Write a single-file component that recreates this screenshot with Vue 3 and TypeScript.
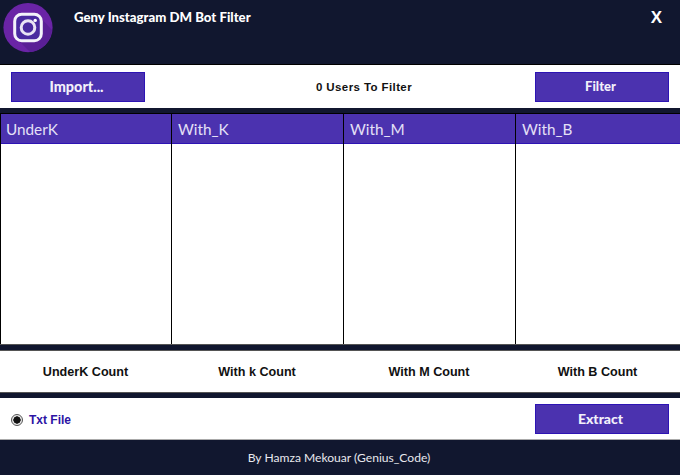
<script setup lang="ts">
const columns = ["UnderK", "With_K", "With_M", "With_B"];
const counts = ["UnderK Count", "With k Count", "With M Count", "With B Count"];
</script>

<template>
  <div class="app">
    <header class="header">
      <svg class="logo" width="50" height="50" viewBox="0 0 50 50" aria-hidden="true">
        <circle cx="25" cy="24.6" r="24.6" fill="#6a24a6" />
        <path d="M13 35 L36 13 L49 27 A24.6 24.6 0 0 1 27 49 Z" fill="#5a1f96" />
        <rect x="11.7" y="11.2" width="26.6" height="26.6" rx="7" fill="#4a2aa0" stroke="#f4f2fa" stroke-width="3" />
        <circle cx="25" cy="24.5" r="6.8" fill="none" stroke="#e9e4f4" stroke-width="3" />
        <circle cx="32.2" cy="17.4" r="1.7" fill="#fff" />
      </svg>
      <h1 class="title">Geny Instagram DM Bot Filter</h1>
      <span class="close">X</span>
    </header>

    <section class="toolbar">
      <button type="button" class="btn btn-import">Import...</button>
      <span class="users">0 Users To Filter</span>
      <button type="button" class="btn btn-small">Filter</button>
    </section>

    <section class="lists">
      <div v-for="col in columns" :key="col" class="col">
        <div class="col-head">{{ col }}</div>
      </div>
    </section>

    <section class="counts">
      <span v-for="c in counts" :key="c" class="count">{{ c }}</span>
    </section>

    <section class="extract">
      <label class="radio">
        <span class="dot"></span>
        <span class="radio-text">Txt File</span>
      </label>
      <button type="button" class="btn btn-extract">Extract</button>
    </section>

    <footer class="footer">By Hamza Mekouar (Genius_Code)</footer>
  </div>
</template>

<style scoped>
.app {
  width: 680px;
  height: 475px;
  display: flex;
  flex-direction: column;
  overflow: hidden;
  background: #11172f;
  font-family: "Liberation Sans", Arial, sans-serif;
}

.header {
  flex: none;
  display: flex;
  align-items: flex-start;
  padding: 3px 0 0 3px;
  box-sizing: border-box;
  border-bottom: 1px solid #000;
  height: 65px;
}
.logo {
  flex: none;
}
.title {
  margin: 6px 0 0 21px;
  font-family: Lato, sans-serif;
  font-size: 13.2px;
  font-weight: 900;
  line-height: 16px;
  color: #fff;
}
.close {
  margin: 6px 18px 0 auto;
  font-size: 17px;
  font-weight: 700;
  line-height: 18px;
  color: #fff;
}

.toolbar {
  height: 43px;
  flex: none;
  background: #fff;
  display: flex;
  align-items: flex-start;
  justify-content: space-between;
  padding: 7px 11px 0;
  box-sizing: border-box;
}
.btn {
  width: 134px;
  height: 30px;
  padding: 0 3px 2px 0;
  border: 1px solid #2d14b4;
  background: #4b32af;
  color: #f2f0fa;
  font-family: Lato, sans-serif;
  font-weight: 900;
  box-sizing: border-box;
}
.btn-import {
  font-size: 14.4px;
}
.btn-small {
  font-size: 13px;
}
.btn-extract {
  font-size: 14px;
}
.users {
  margin: 8px 0 0 48px;
  font-size: 11.5px;
  font-weight: 700;
  letter-spacing: 0.4px;
  line-height: 14px;
  color: #111;
}

.lists {
  height: 232px;
  flex: none;
  margin-top: 5px;
  display: flex;
  background: #fff;
  border-top: 1px solid #000;
  border-bottom: 1px solid #555;
  box-sizing: border-box;
}
.col {
  width: 172px;
  flex: none;
  box-sizing: border-box;
  border-right: 1px solid #000;
}
.col:first-child {
  border-left: 1px solid #000;
}
.col:last-child {
  flex: 1;
  border-right: 0;
}
.col-head {
  height: 30px;
  padding-left: 6px;
  box-sizing: border-box;
  background: #4b32af;
  border-bottom: 1px solid #2d14b4;
  color: #e4e0f6;
  font-family: Lato, sans-serif;
  font-size: 15.3px;
  line-height: 31px;
}
.col:first-child .col-head {
  padding-left: 5px;
}

.counts {
  height: 43px;
  flex: none;
  margin-top: 5px;
  background: #fff;
  display: grid;
  grid-template-columns: 171px 172px 172px 165px;
  align-items: center;
  justify-items: center;
  border-top: 1px solid #555;
  border-bottom: 1px solid #555;
  box-sizing: border-box;
}
.count {
  font-size: 12.6px;
  font-weight: 700;
  color: #111;
}

.extract {
  height: 42px;
  flex: none;
  margin-top: 5px;
  background: #fff;
  display: flex;
  align-items: flex-start;
  justify-content: space-between;
  padding: 6px 11px 0;
  box-sizing: border-box;
  border-bottom: 1px solid #aaa;
}
.radio {
  display: flex;
  align-items: center;
  gap: 6px;
  margin-top: 9px;
}
.dot {
  width: 12px;
  height: 12px;
  box-sizing: border-box;
  border: 1px solid #555;
  border-radius: 50%;
  background: radial-gradient(circle, #111 0 3.4px, #e8e8e8 3.9px);
}
.radio-text {
  font-size: 12px;
  font-weight: 700;
  color: #2d14a4;
}

.footer {
  flex: 1;
  text-align: center;
  padding: 10px 2px 0 0;
  font-family: Lato, sans-serif;
  font-size: 12.1px;
  line-height: 16px;
  color: #e8e8ee;
}
</style>
